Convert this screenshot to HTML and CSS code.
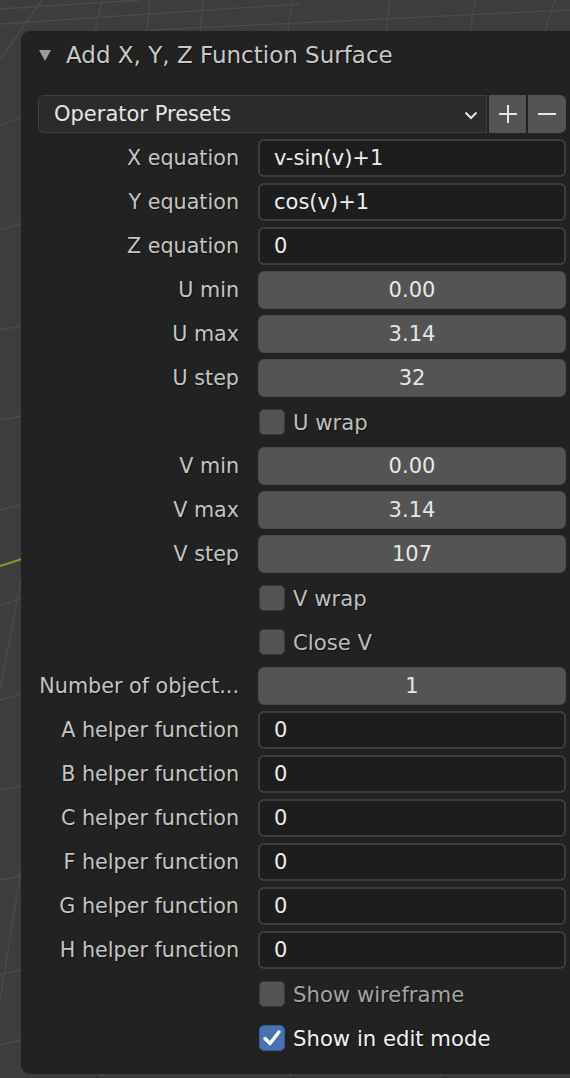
FILE: index.html
```html
<!DOCTYPE html>
<html>
<head>
<meta charset="utf-8">
<link rel="stylesheet" href="styles.css">
</head>
<body>
<svg class="viewport" width="570" height="1078" viewBox="0 0 570 1078">
  <g stroke="#4b4b4b" stroke-width="1.3" fill="none">
    <line x1="0" y1="9" x2="140" y2="0"/>
    <line x1="0" y1="24" x2="300" y2="4"/>
    <line x1="150" y1="30" x2="570" y2="10"/>
    <line x1="20" y1="31" x2="42" y2="0"/>
    <line x1="95" y1="31" x2="102" y2="0"/>
    <line x1="147" y1="31" x2="150" y2="0"/>
    <line x1="200" y1="31" x2="203" y2="0"/>
    <line x1="288" y1="31" x2="292" y2="0"/>
    <line x1="386" y1="31" x2="390" y2="0"/>
    <line x1="470" y1="31" x2="475" y2="0"/>
    <line x1="545" y1="31" x2="555" y2="0"/>
    <line x1="0" y1="125" x2="21" y2="118"/>
    <line x1="0" y1="230" x2="21" y2="224"/>
    <line x1="0" y1="330" x2="21" y2="326"/>
    <line x1="0" y1="420" x2="21" y2="416"/>
    <line x1="0" y1="510" x2="21" y2="505"/>
    <line x1="0" y1="605" x2="21" y2="599"/>
    <line x1="0" y1="700" x2="21" y2="694"/>
    <line x1="0" y1="790" x2="21" y2="786"/>
    <line x1="0" y1="880" x2="21" y2="876"/>
    <line x1="0" y1="975" x2="21" y2="970"/>
    <line x1="0" y1="1045" x2="21" y2="1040"/>
    <line x1="0" y1="60" x2="21" y2="30"/>
    <line x1="0" y1="690" x2="21" y2="580"/>
    <line x1="0" y1="1000" x2="21" y2="870"/>
    <line x1="100" y1="1078" x2="104" y2="1074"/>
    <line x1="290" y1="1078" x2="291" y2="1074"/>
    <line x1="440" y1="1078" x2="441" y2="1074"/>
  </g>
  <line x1="0" y1="566" x2="22" y2="559" stroke="#7aa12a" stroke-width="2"/>
</svg>

<div class="panel">
  <div class="header">
    <span class="tri"></span>
    <span class="title">Add X, Y, Z Function Surface</span>
  </div>

  <div class="rows">
    <div class="presets">
      <div class="dropdown">
        <span>Operator Presets</span>
        <svg class="chev" width="14" height="9" viewBox="0 0 14 9"><path d="M1.5 1.5 L7 7 L12.5 1.5" stroke="#e6e6e6" stroke-width="2" fill="none"/></svg>
      </div>
      <div class="pbtn"><svg width="20" height="20" viewBox="0 0 20 20"><path d="M10 1 V19 M1 10 H19" stroke="#e6e6e6" stroke-width="2"/></svg></div>
      <div class="pbtn"><svg width="20" height="20" viewBox="0 0 20 20"><path d="M1 10 H19" stroke="#e6e6e6" stroke-width="2"/></svg></div>
    </div>

    <div class="row"><div class="label">X equation</div><div class="text">v-sin(v)+1</div></div>
    <div class="row"><div class="label">Y equation</div><div class="text">cos(v)+1</div></div>
    <div class="row"><div class="label">Z equation</div><div class="text">0</div></div>
    <div class="row"><div class="label">U min</div><div class="num">0.00</div></div>
    <div class="row"><div class="label">U max</div><div class="num">3.14</div></div>
    <div class="row"><div class="label">U step</div><div class="num">32</div></div>
    <div class="row"><div class="label"></div><div class="check"><span class="box"></span><span>U wrap</span></div></div>
    <div class="row"><div class="label">V min</div><div class="num">0.00</div></div>
    <div class="row"><div class="label">V max</div><div class="num">3.14</div></div>
    <div class="row"><div class="label">V step</div><div class="num">107</div></div>
    <div class="row"><div class="label"></div><div class="check"><span class="box"></span><span>V wrap</span></div></div>
    <div class="row"><div class="label"></div><div class="check"><span class="box"></span><span>Close V</span></div></div>
    <div class="row"><div class="label">Number of object...</div><div class="num">1</div></div>
    <div class="row"><div class="label">A helper function</div><div class="text">0</div></div>
    <div class="row"><div class="label">B helper function</div><div class="text">0</div></div>
    <div class="row"><div class="label">C helper function</div><div class="text">0</div></div>
    <div class="row"><div class="label">F helper function</div><div class="text">0</div></div>
    <div class="row"><div class="label">G helper function</div><div class="text">0</div></div>
    <div class="row"><div class="label">H helper function</div><div class="text">0</div></div>
    <div class="row"><div class="label"></div><div class="check dim"><span class="box"></span><span>Show wireframe</span></div></div>
    <div class="row"><div class="label"></div><div class="check on"><span class="box"><svg width="22" height="22" viewBox="0 0 22 22"><path d="M4 11.5 L9 16.5 L18 5" stroke="#fff" stroke-width="3.4" fill="none" stroke-linejoin="round" stroke-linecap="round"/></svg></span><span>Show in edit mode</span></div></div>
  </div>
</div>
</body>
</html>
```

FILE: styles.css
```css
html, body {
  margin: 0;
  padding: 0;
}
body {
  width: 570px;
  height: 1078px;
  overflow: hidden;
  background: #3d3d3d;
  position: relative;
  font-family: "DejaVu Sans", "Liberation Sans", sans-serif;
  font-size: 21px;
  color: #e6e6e6;
}
.viewport {
  position: absolute;
  left: 0;
  top: 0;
}
.panel {
  position: relative;
  margin: 31px 0 0 21px;
  width: 570px;
  height: 1043px;
  box-sizing: border-box;
  background: #222222;
  border-radius: 9px 0 0 9px;
  padding: 0 0 0 17px;
}
.header {
  height: 48px;
  display: flex;
  align-items: center;
  gap: 15px;
  padding-left: 1px;
  margin-bottom: 16px;
}
.tri {
  width: 0;
  height: 0;
  border-left: 6px solid transparent;
  border-right: 6px solid transparent;
  border-top: 11px solid #9a9a9a;
  margin-top: 1px;
}
.title {
  font-size: 23px;
  color: #c8c8c8;
  text-shadow: 1px 1px 1px rgba(0,0,0,0.6);
}
.rows {
  display: flex;
  flex-direction: column;
  gap: 6px;
  width: 528px;
}
.presets {
  height: 38px;
  display: flex;
  gap: 2px;
}
.dropdown {
  flex: 1;
  box-sizing: border-box;
  background: #2b2b2b;
  border: 1px solid #3e3e3e;
  border-radius: 6px 0 0 6px;
  display: flex;
  align-items: center;
  justify-content: space-between;
  padding: 0 8px 0 15px;
  color: #e6e6e6;
}
.chev {
  margin-top: 3px;
}
.pbtn {
  width: 37px;
  background: #545454;
  display: flex;
  align-items: center;
  justify-content: center;
}
.pbtn:last-child {
  width: 38px;
  border-radius: 0 6px 6px 0;
}
.row {
  height: 38px;
  display: grid;
  grid-template-columns: 201px 308px;
  column-gap: 19px;
  align-items: center;
}
.label {
  text-align: right;
  font-size: 20.7px;
  color: #c4c4c4;
  white-space: nowrap;
  text-shadow: 1px 1px 1px rgba(0,0,0,0.5);
}
.text, .num {
  height: 38px;
  box-sizing: border-box;
  border-radius: 6px;
  display: flex;
  align-items: center;
}
.text {
  background: #1d1d1d;
  border: 2px solid #3d3d3d;
  padding-left: 14px;
  color: #ececec;
}
.num {
  background: #545454;
  border: 1px solid #4a4a4a;
  justify-content: center;
  color: #e6e6e6;
}
.check {
  display: flex;
  align-items: center;
  gap: 8px;
  padding-left: 1px;
  font-size: 21.2px;
  color: #bdbdbd;
  text-shadow: 1px 1px 1px rgba(0,0,0,0.5);
}
.check.dim {
  color: #a3a3a3;
}
.check.on {
  color: #f2f2f2;
}
.box {
  width: 26px;
  height: 26px;
  box-sizing: border-box;
  border-radius: 5px;
  background: #545454;
  border: 1px solid #3a3a3a;
  display: flex;
  align-items: center;
  justify-content: center;
}
.check.on .box {
  background: #4772b3;
  border-color: #3a5a90;
}
```
